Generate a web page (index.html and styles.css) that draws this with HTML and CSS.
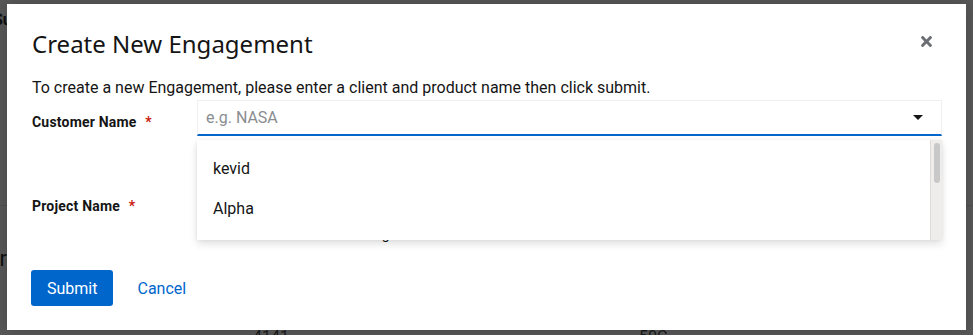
FILE: index.html
```html
<!DOCTYPE html>
<html lang="en">
<head>
    <meta charset="UTF-8">
    <meta name="viewport" content="width=device-width, initial-scale=1.0">
    <title>Create New Engagement</title>
    <link rel="stylesheet" href="styles.css">
</head>
<body>
    <div class="page">
        <h2 class="page-title">Summary</h2>
        <div class="page-rule"></div>
        <div class="page-sub"><h2>Cluster</h2></div>
        <div class="page-stats">
            <span class="stat">4141</span>
            <span class="stat">50C</span>
        </div>
    </div>

    <div class="modal" role="dialog" aria-modal="true">
        <div class="modal-header">
            <h1 class="modal-title">Create New Engagement</h1>
            <button class="modal-close" aria-label="Close">
                <svg viewBox="0 80 352 352" width="11" height="11">
                    <path fill="currentColor" d="M242.72 256l100.07-100.07c12.28-12.28 12.28-32.19 0-44.48l-22.24-22.24c-12.28-12.28-32.19-12.28-44.48 0L176 189.28 75.930 89.21c-12.280-12.28-32.190-12.28-44.480 0L9.21 111.45c-12.28 12.28-12.28 32.19 0 44.48L109.28 256 9.21 356.07c-12.28 12.28-12.28 32.19 0 44.48l22.24 22.24c12.28 12.28 32.2 12.28 44.48 0L176 322.72l100.07 100.07c12.28 12.28 32.2 12.28 44.48 0l22.240-22.24c12.28-12.28 12.28-32.19 0-44.48L242.72 256z"/>
                </svg>
            </button>
        </div>
        <p class="modal-desc">To create a new Engagement, please enter a client and product name then click submit.</p>

        <form class="form">
            <label class="form-label">Customer Name <span class="req">*</span></label>
            <div class="select">
                <div class="select-toggle">
                    <span class="placeholder">e.g. NASA</span>
                    <svg class="caret" viewBox="0 0 10 5" width="10" height="5">
                        <path fill="currentColor" d="M0 0h10L5 5z"/>
                    </svg>
                </div>
                <div class="select-menu">
                    <ul class="menu-list">
                        <li class="menu-item">kevid</li>
                        <li class="menu-item">Alpha</li>
                    </ul>
                    <div class="menu-scroll"><div class="menu-thumb"></div></div>
                </div>
            </div>

            <label class="form-label">Project Name <span class="req">*</span></label>
            <div class="field">
                <input class="text-input" type="text">
                <div class="helper">Enter the title which is showing on the overview</div>
            </div>
        </form>

        <div class="modal-footer">
            <button class="btn-primary">Submit</button>
            <button class="btn-link">Cancel</button>
        </div>
    </div>
</body>
</html>
```
FILE: styles.css
```css
body{
    margin:0;
    height:335px;
    overflow:hidden;
    background-color:#585858;
    font-family:Roboto, "Liberation Sans", sans-serif;
    color:#151515;
}
.page-title{
    margin:0 0 0 -7px;
    padding-top:10px;
    font-size:16px;
    font-weight:700;
    line-height:20px;
    color:#101010;
}
.page-rule{
    margin-top:175px;
    height:1px;
    background-color:#4f4f4f;
}
.page-sub{
    display:flex;
    justify-content:flex-end;
    width:7px;
    margin-top:40px;
}
.page-sub h2{
    margin:0;
    white-space:nowrap;
    font-size:22px;
    font-weight:400;
    line-height:26px;
    color:#101010;
}
.page-stats{
    display:flex;
    margin-top:55px;
    padding-left:253px;
    gap:350px;
    font-size:16px;
    line-height:19px;
    color:#1a1a1a;
}

.modal{
    position:absolute;
    left:7px;
    top:4px;
    width:959px;
    height:326px;
    box-sizing:border-box;
    padding:24px;
    background-color:#fff;
    box-shadow:0 0 16px rgba(3,3,3,0.2);
}
.modal-header{
    display:flex;
    justify-content:space-between;
    align-items:flex-start;
}
.modal-title{
    margin:0 0 0 1px;
    font-family:"Noto Sans", sans-serif;
    font-size:24px;
    font-weight:400;
    line-height:31px;
    color:#151515;
}
.modal-close{
    margin:8px 10px 0 0;
    padding:0;
    width:11px;
    height:11px;
    border:none;
    background:none;
    color:#6a6e73;
    cursor:pointer;
}
.modal-close svg{
    display:block;
}
.modal-desc{
    margin:17px 0 0 1px;
    font-size:16px;
    line-height:24px;
}

.form{
    display:grid;
    grid-template-columns:166px 1fr;
    row-gap:48px;
}
.form-label{
    padding:12px 0 0 1px;
    font-size:14px;
    font-weight:700;
    line-height:21px;
    letter-spacing:0.2px;
}
.req{
    margin-left:5px;
    color:#c9190b;
}
.select{
    position:relative;
}
.select-toggle{
    display:flex;
    align-items:center;
    justify-content:space-between;
    height:36px;
    box-sizing:border-box;
    padding:0 18px 0 8px;
    border:1px solid #f0f0f0;
    border-bottom:2px solid #06c;
}
.placeholder{
    font-size:16px;
    color:#8a8d90;
}
.caret{
    display:block;
    color:#151515;
}
.select-menu{
    position:absolute;
    top:40px;
    left:0;
    right:0;
    height:100px;
    display:flex;
    background-color:#fff;
    box-shadow:0 4px 8px rgba(3,3,3,0.12), 0 0 4px rgba(3,3,3,0.06);
    z-index:2;
}
.menu-list{
    flex:1;
    margin:0;
    padding:9px 0 0;
    list-style:none;
}
.menu-item{
    padding:8px 16px;
    font-size:16px;
    line-height:24px;
    color:#151515;
}
.menu-scroll{
    width:6px;
    padding:3px 2px 0 3px;
    background-color:#efedeb;
    border-left:1px solid #dedad6;
}
.menu-thumb{
    width:6px;
    height:40px;
    border-radius:3px;
    background-color:#c8c8c8;
}
.field{
    display:flex;
    flex-direction:column;
}
.text-input{
    height:36px;
    box-sizing:border-box;
    border:1px solid #f0f0f0;
    border-bottom-color:#8a8d90;
    font-family:inherit;
    font-size:16px;
}
.helper{
    margin-top:4px;
    font-size:14px;
    line-height:21px;
    color:#151515;
}
.modal-footer{
    display:flex;
    align-items:center;
    gap:24px;
    margin-top:25px;
}
.btn-primary{
    height:36px;
    padding:0 16px;
    border:none;
    border-radius:3px;
    background-color:#06c;
    color:#fff;
    font-family:inherit;
    font-size:16px;
    cursor:pointer;
}
.btn-link{
    padding:0;
    border:none;
    background:none;
    color:#06c;
    font-family:inherit;
    font-size:16px;
    cursor:pointer;
}
```
